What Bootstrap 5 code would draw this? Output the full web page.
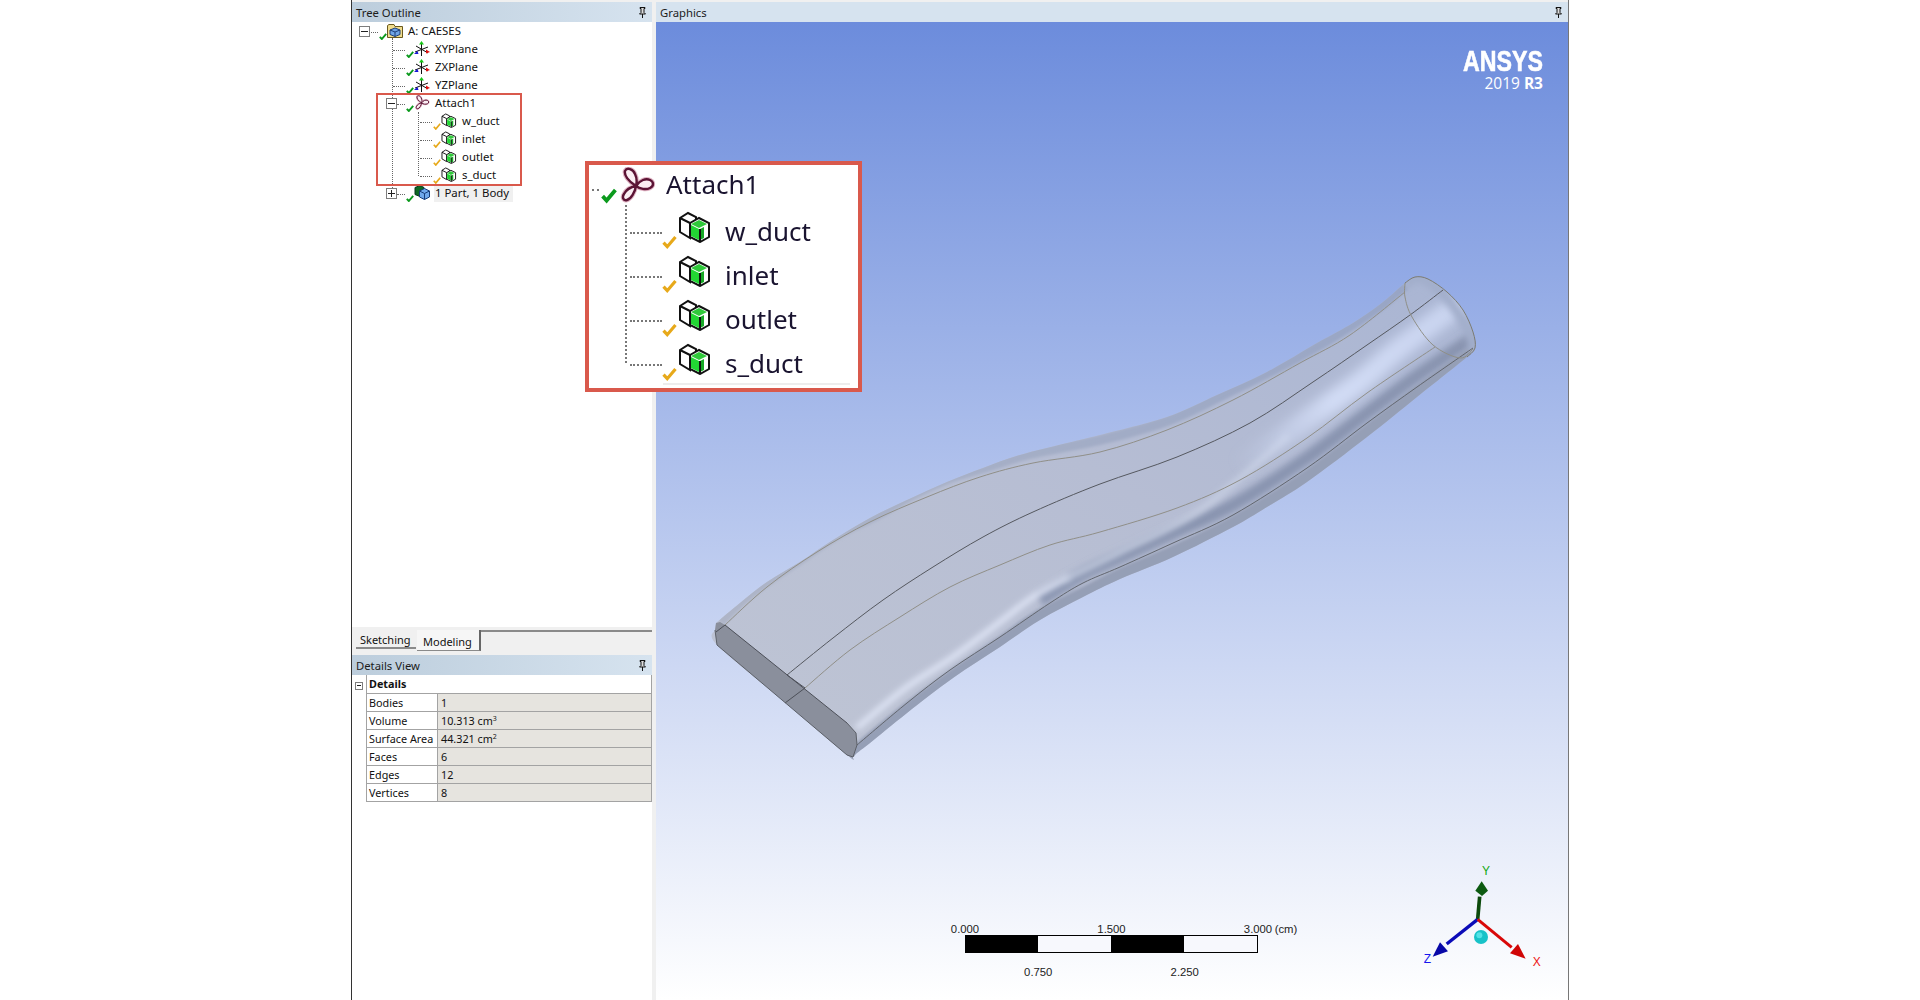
<!DOCTYPE html>
<html lang="en">
<head>
    <meta charset="UTF-8">
    <title>Tree Outline - Graphics</title>
    <link href="https://cdn.jsdelivr.net/npm/bootstrap@5.3.0/dist/css/bootstrap.min.css" rel="stylesheet">
    <style>
        html, body { height: 1000px; overflow: hidden; background: #fff; }
        body { font-family: "Noto Sans", sans-serif; font-size: 11px; color: #111; }

        .app-frame { position: relative; width: 1218px; height: 1000px; margin-left: 351px; padding-top: 2px; border-left: 1px solid #333; border-right: 1px solid #777; background: #f0f0f0; }
        .left-pane { width: 300px; height: 998px; background: #fff; }
        .pane-gutter { width: 4px; background: #f0f0f0; }
        .right-pane { width: 912px; height: 998px; }
        .pane-head { height: 20px; padding: 1px 4px 0; line-height: 19px; font-size: 11.3px; color: #1c1c1c; background: linear-gradient(to right, #bccddc, #d6e3ef); }
        .right-pane .pane-head { background: #d6e3ef; }
        .pin-icon { width: 9px; height: 11px; margin-right: 1px; }

        /* tree */
        .tree-box { position: relative; height: 605px; }
        .tree-row { display: flex; align-items: center; height: 18px; font-size: 11.4px; white-space: nowrap; }
        .d0 { padding-left: 7px; }
        .d1 { padding-left: 34px; }
        .d2 { padding-left: 61px; }
        .slot { position: relative; flex: 0 0 20px; height: 18px; }
        .slot::after { content: ""; position: absolute; top: 10px; right: 1px; width: 12px; border-top: 1px dotted #666; }
        .slot.no-dots::after { width: 8px; }
        .xbox { position: absolute; top: 4px; left: 0; z-index: 1; width: 11px; height: 11px; border: 1px solid #7d7d7d; background: #fff; }
        .xbox::before { content: ""; position: absolute; top: 4px; left: 1px; width: 7px; height: 1px; background: #222; }
        .xbox.closed::after { content: ""; position: absolute; top: 1px; left: 4px; width: 1px; height: 7px; background: #222; }
        .ck { flex: 0 0 8px; width: 8px; height: 7px; margin-top: 11px; }
        .ico { flex: 0 0 16px; width: 16px; height: 15px; margin-left: 0; margin-top: -2px; }
        .lbl { margin-left: 5px; }
        .lbl-on { margin-left: 4px; padding: 0 4px 0 1px; background: #f0f0f0; }
        .vguide { position: absolute; width: 0; border-left: 1px dotted #666; }
        .hl-box { position: absolute; left: 24px; top: 93px; width: 146px; height: 93px; border: 2px solid #d9594c; }

        /* tabs and details */
        .tab-strip { height: 28px; padding: 3px 0 0 4px; background: #f0f0f0; }
        .tab-a { width: 60px; height: 18px; margin-top: 1px; padding: 1px 0 0 4px; line-height: 16px; background: #f0f0f0; border-bottom: 2px solid #8a8a8a; }
        .tab-b { width: 64px; height: 21px; margin-left: 1px; padding: 4px 0 0 6px; line-height: 16px; background: #f6f6f6; border-right: 2px solid #666; border-bottom: 1px solid #8a8a8a; }
        .tab-rest { height: 2px; background: #8a8a8a; }
        .details-box { height: 325px; background: #fff; }
        .tbl-gutter { position: relative; flex: 0 0 14px; }
        .xmini { position: absolute; left: 3px; top: 7px; width: 8px; height: 8px; border: 1px solid #7d7d7d; }
        .xmini::before { content: ""; position: absolute; left: 1px; top: 2px; width: 4px; height: 1px; background: #222; }
        .det-table { width: 286px; border-collapse: collapse; table-layout: fixed; font-size: 10.8px; }
        .det-table td { height: 18px; padding: 0 3px; line-height: 15px; border: 1px solid #a3a3a3; white-space: nowrap; }
        .det-table td:first-child { padding-left: 2px; }
        .det-table .val { background: #e6e4df; }
        .det-table th { height: 18px; padding: 0 2px; font-weight: 700; border: 1px solid #a3a3a3; border-top: 0; }
        .det-table sup { top: -.45em; font-size: 7px; }

        /* graphics */
        .view-port { position: relative; height: 978px; overflow: hidden; background: linear-gradient(to bottom, #6c8cdc, #fff); }
        .duct-svg { position: absolute; left: 44px; top: 238px; width: 800px; height: 520px; }
        .triad-svg { position: absolute; left: 724px; top: 828px; width: 188px; height: 150px; }
        .brand-box { position: absolute; top: 27px; right: 25px; color: #fff; text-align: right; }
        .brand-name { font-family: "Liberation Sans", sans-serif; font-size: 29px; font-weight: 700; line-height: 25px; -webkit-text-stroke: .6px #fff; transform: scaleX(.8); transform-origin: right center; }
        .brand-ver { font-family: "Open Sans", sans-serif; font-size: 15.5px; line-height: 19px; font-weight: 400; }
        .brand-ver b { font-weight: 700; }
        .scale-box { position: absolute; left: 309px; top: 900px; width: 293px; font-family: "Liberation Sans", sans-serif; font-size: 11.3px; color: #222; }
        .scale-labels { position: relative; height: 13px; }
        .scale-labels.low { height: 22px; }
        .scale-labels span { position: absolute; top: 0; transform: translateX(-50%); line-height: 14px; white-space: nowrap; }
        .scale-labels.low span { top: 12px; }
        .scale-bar { height: 18px; border: 1px solid #000; border-left: 0; }
        .seg-dark { flex: 1 1 0; background: #000; }
        .seg-lite { flex: 1 1 0; background: #f7f8fd; }

        /* enlarged callout */
        .zoom-card { position: absolute; left: 233px; top: 161px; width: 277px; height: 231px; padding: 6px 0 0 7px; background: #fff; border: 4.5px solid #d9594c; }
        .zoom-inner { position: relative; height: 210px; filter: blur(.55px); }
        .zoom-row { display: flex; align-items: center; height: 44px; font-size: 26px; white-space: nowrap; color: #1a1430; }
        .zoom-row.top { height: 42px; margin: -7px 0 7px -4px; }
        .zoom-row.sub { padding-left: 34px; }
        .zdots { flex: 0 0 7px; margin-top: 10px; border-top: 2px dotted #777; }
        .zdots.long { flex: 0 0 32px; margin-top: -4px; }
        .zck-g { flex: 0 0 16px; width: 16px; height: 17px; margin: 20px 0 0 2px; }
        .zck-o { flex: 0 0 15px; width: 15px; height: 16px; margin: 14px 0 0 0; }
        .zblade { flex: 0 0 36px; width: 36px; height: 36px; margin: 0 0 0 2px; }
        .zcube { flex: 0 0 34px; width: 34px; height: 32px; margin: -16px 0 0 1px; }
        .zlbl-a { margin-left: 11px; margin-top: -1px; }
        .zlbl-b { margin-left: 13px; margin-top: -8px; }
        .zguide { position: absolute; left: 29px; top: 41px; height: 158px; width: 0; border-left: 2px dotted #777; }
        .zstrip { position: absolute; left: 67px; right: 8px; top: 219px; height: 2px; background: #ededed; }
    </style>
</head>
<body>
    <svg width="0" height="0" class="position-absolute">
        <symbol id="s-pin" viewBox="0 0 9 11">
            <path d="M2 .5h5v1H6v4l1.5 1.5h-6L3 5.500v-4H2zM4.500 7v4" fill="#ddd" stroke="#111" stroke-width="1"/>
        </symbol>
        <symbol id="s-check-g" viewBox="0 0 8 7">
            <path d="M.8 3.800l2 2.200L7.200.8" fill="none" stroke="#0b9a1d" stroke-width="1.900"/>
        </symbol>
        <symbol id="s-check-o" viewBox="0 0 8 7">
            <path d="M.8 3.800l2 2.200L7.200.8" fill="none" stroke="#e7a91a" stroke-width="1.700"/>
        </symbol>
        <symbol id="s-cube" viewBox="0 0 34 32">
            <path d="M2 7l8-5 8 4v3l-6 4v14L2 21z" fill="#fff" stroke="#111" stroke-width="2"/>
            <path d="M12 12l9-5 10 5v14l-9 5-10-5z" fill="#fff" stroke="#111" stroke-width="2"/>
            <path d="M13 13l8-4 8 4-8 4z" fill="#2fc93a"/>
            <path d="M13 14l8 4v11l-8-4z" fill="#22d633"/>
            <path d="M22 18l4-2v11l-4 2z" fill="#16a925"/>
            <path d="M22 18v12M2 7l10 5" fill="none" stroke="#111" stroke-width="2"/>
        </symbol>
        <symbol id="s-plane" viewBox="0 0 16 15">
            <path d="M7.500 2v13M2 5l12 7M1 11l13-5" fill="none" stroke="#111" stroke-width="1"/>
            <path d="M7.500 0l2.500 3.500H5z" fill="#14c814"/>
            <path d="M16 11l-4 1.500V8.500z" fill="#e01010"/>
            <path d="M0 13l3.500-3 1 3z" fill="#1515d8"/>
        </symbol>
        <symbol id="s-folder" viewBox="0 0 16 15">
            <path d="M.5 2.500V14.500h15V3.500H8l-1-2H2z" fill="#f0dc8c" stroke="#6b5a1e" stroke-width="1"/>
            <path d="M8 5l5 2v4.500l-5 2-5-2V7z" fill="#6fa4e6" stroke="#1c3e78" stroke-width="1"/>
            <path d="M3 7l5 2 5-2M8 9v4.500" fill="none" stroke="#1c3e78" stroke-width="1"/>
        </symbol>
        <symbol id="s-part" viewBox="0 0 16 15">
            <path d="M1 2.500L6 .5l4 2v7l-4 2-5-2z" fill="#0d6a24" stroke="#06361a" stroke-width="1"/>
            <path d="M5.500 6l5-2.500L15.500 6v6l-5 2.500-5-2.500z" fill="#6fa8ec" stroke="#173d7a" stroke-width="1"/>
            <path d="M5.500 6l5 2.500L15.500 6M10.500 8.500v6" fill="none" stroke="#173d7a" stroke-width="1"/>
        </symbol>
        <symbol id="s-blade" viewBox="0 0 36 36">
            <path d="M17 19C9 14 5 8 6 4 8 0 14 2 16 7 18 11 18 15 17 19zM17 19C21 13 27 11 31 13 35 15 35 19 31 21 27 23 21 22 17 19zM17 19C16 25 12 32 8 33 4 34 3 30 5 27 7 23 12 20 17 19z" fill="#fff" stroke="#e0b4c4" stroke-width="4.500"/>
            <path d="M17 19C9 14 5 8 6 4 8 0 14 2 16 7 18 11 18 15 17 19zM17 19C21 13 27 11 31 13 35 15 35 19 31 21 27 23 21 22 17 19zM17 19C16 25 12 32 8 33 4 34 3 30 5 27 7 23 12 20 17 19z" fill="#fbeef3" stroke="#5c1435" stroke-width="2.400"/>
        </symbol>
    </svg>

    <div class="app-frame d-flex">
        <div class="left-pane d-flex flex-column flex-shrink-0">
            <div class="pane-head d-flex justify-content-between align-items-center">
                <span>Tree Outline</span>
                <svg class="pin-icon"><use href="#s-pin"/></svg>
            </div>
            <div class="tree-box">
                <div class="vguide" style="left:40px;top:16px;height:154px"></div>
                <div class="vguide" style="left:66px;top:90px;height:64px"></div>

                <div class="tree-row d0">
                    <div class="slot"><i class="xbox"></i></div>
                    <svg class="ck"><use href="#s-check-g"/></svg>
                    <svg class="ico"><use href="#s-folder"/></svg>
                    <span class="lbl">A: CAESES</span>
                </div>
                <div class="tree-row d1">
                    <div class="slot"></div>
                    <svg class="ck"><use href="#s-check-g"/></svg>
                    <svg class="ico"><use href="#s-plane"/></svg>
                    <span class="lbl">XYPlane</span>
                </div>
                <div class="tree-row d1">
                    <div class="slot"></div>
                    <svg class="ck"><use href="#s-check-g"/></svg>
                    <svg class="ico"><use href="#s-plane"/></svg>
                    <span class="lbl">ZXPlane</span>
                </div>
                <div class="tree-row d1">
                    <div class="slot"></div>
                    <svg class="ck"><use href="#s-check-g"/></svg>
                    <svg class="ico"><use href="#s-plane"/></svg>
                    <span class="lbl">YZPlane</span>
                </div>
                <div class="tree-row d1">
                    <div class="slot no-dots"><i class="xbox"></i></div>
                    <svg class="ck"><use href="#s-check-g"/></svg>
                    <svg class="ico"><use href="#s-blade"/></svg>
                    <span class="lbl">Attach1</span>
                </div>
                <div class="tree-row d2">
                    <div class="slot"></div>
                    <svg class="ck"><use href="#s-check-o"/></svg>
                    <svg class="ico"><use href="#s-cube"/></svg>
                    <span class="lbl">w_duct</span>
                </div>
                <div class="tree-row d2">
                    <div class="slot"></div>
                    <svg class="ck"><use href="#s-check-o"/></svg>
                    <svg class="ico"><use href="#s-cube"/></svg>
                    <span class="lbl">inlet</span>
                </div>
                <div class="tree-row d2">
                    <div class="slot"></div>
                    <svg class="ck"><use href="#s-check-o"/></svg>
                    <svg class="ico"><use href="#s-cube"/></svg>
                    <span class="lbl">outlet</span>
                </div>
                <div class="tree-row d2">
                    <div class="slot"></div>
                    <svg class="ck"><use href="#s-check-o"/></svg>
                    <svg class="ico"><use href="#s-cube"/></svg>
                    <span class="lbl">s_duct</span>
                </div>
                <div class="tree-row d1">
                    <div class="slot no-dots"><i class="xbox closed"></i></div>
                    <svg class="ck"><use href="#s-check-g"/></svg>
                    <svg class="ico"><use href="#s-part"/></svg>
                    <span class="lbl-on">1 Part, 1 Body</span>
                </div>
            </div>

            <div class="tab-strip d-flex">
                <div class="tab-a">Sketching</div>
                <div class="tab-b">Modeling</div>
                <div class="flex-grow-1"><div class="tab-rest"></div></div>
            </div>

            <div class="pane-head d-flex justify-content-between align-items-center">
                <span>Details View</span>
                <svg class="pin-icon"><use href="#s-pin"/></svg>
            </div>
            <div class="details-box d-flex align-items-start">
                <div class="tbl-gutter"><i class="xmini"></i></div>
                <table class="det-table">
                    <colgroup><col style="width:71px"><col></colgroup>
                    <tr><th colspan="2">Details</th></tr>
                    <tr><td>Bodies</td><td class="val">1</td></tr>
                    <tr><td>Volume</td><td class="val">10.313 cm<sup>3</sup></td></tr>
                    <tr><td>Surface Area</td><td class="val">44.321 cm<sup>2</sup></td></tr>
                    <tr><td>Faces</td><td class="val">6</td></tr>
                    <tr><td>Edges</td><td class="val">12</td></tr>
                    <tr><td>Vertices</td><td class="val">8</td></tr>
                </table>
            </div>
        </div>

        <div class="pane-gutter"></div>

        <div class="right-pane d-flex flex-column">
            <div class="pane-head d-flex justify-content-between align-items-center">
                <span>Graphics</span>
                <svg class="pin-icon"><use href="#s-pin"/></svg>
            </div>
            <div class="view-port">
                <svg class="duct-svg" viewBox="700 260 800 520">
                    <defs>
                        <linearGradient id="body-fill" x1="0" y1="1" x2="1" y2="0">
                            <stop offset="0" stop-color="#bfc5d4"/>
                            <stop offset=".55" stop-color="#b6bdd3"/>
                            <stop offset="1" stop-color="#a9b5d3"/>
                        </linearGradient>
                        <linearGradient id="top-band" gradientUnits="userSpaceOnUse" x1="716" y1="0" x2="1405" y2="0">
                            <stop offset="0" stop-color="#aeb5c7"/>
                            <stop offset="1" stop-color="#98a5c5"/>
                        </linearGradient>
                        <linearGradient id="end-glow" gradientUnits="userSpaceOnUse" x1="1240" y1="470" x2="1470" y2="300">
                            <stop offset="0" stop-color="#cfdaf4" stop-opacity="0"/>
                            <stop offset=".4" stop-color="#d2dcf5"/>
                            <stop offset="1" stop-color="#c8d3ef"/>
                        </linearGradient>
                        <filter id="tiny" filterUnits="userSpaceOnUse" x="700" y="260" width="800" height="520"><feGaussianBlur stdDeviation="1.500"/></filter>
                        <filter id="soft" filterUnits="userSpaceOnUse" x="700" y="260" width="800" height="520"><feGaussianBlur stdDeviation="3"/></filter>
                        <filter id="softer" filterUnits="userSpaceOnUse" x="700" y="260" width="800" height="520"><feGaussianBlur stdDeviation="6"/></filter>
                        <clipPath id="body-clip"><path class="spline body-outline" data-close="1"/></clipPath>
                    </defs>
                    <path class="spline body-outline" data-close="1" fill="url(#body-fill)"/>
                    <g clip-path="url(#body-clip)">
                        <!-- top edge falloff -->
                        <path class="spline" fill="none" stroke="url(#top-band)" stroke-width="10" filter="url(#tiny)" data-pts="720,622 745,598 772,578 805,556 840,533 875,516 912,495 950,478 990,466 1030,454 1100,440 1167,421 1225,394 1285,364 1335,336 1380,306 1405,285"/>
                        <!-- shadow above the lower seam -->
                        <path class="spline" fill="none" stroke="#8994b0" stroke-width="13" filter="url(#soft)" data-pts="1040,600 1083,574 1120,557 1173,533 1233,505 1307,458 1367,413 1417,376 1473,338"/>
                        <!-- highlights -->
                        <path class="spline" fill="none" stroke="#e4eafa" stroke-width="5" stroke-linecap="round" filter="url(#soft)" data-pts="858,727 907,687 953,657 1000,622 1033,597 1067,578"/>
                        <path class="spline" fill="none" stroke="#c9d1e4" stroke-width="5" stroke-linecap="round" filter="url(#soft)" data-pts="1067,578 1120,552 1200,510 1287,437"/>
                        <path class="spline" fill="none" stroke="url(#end-glow)" stroke-width="22" stroke-linecap="round" filter="url(#softer)" data-pts="1240,468 1307,420 1360,382 1400,348 1465,300"/>
                        <!-- band under the lower seam -->
                        <path class="spline" fill="none" stroke="#959fb6" stroke-width="15" filter="url(#tiny)" data-pts="850,758 907,711 953,677 1000,645 1040,617 1083,595 1120,576 1173,553 1233,524 1307,478 1367,433 1417,394 1472,354"/>
                        <!-- far end of the duct -->
                        <path class="spline" fill="none" stroke="#a2aecb" stroke-width="10" filter="url(#soft)" data-pts="1405,285 1420,278 1445,296 1468,330 1474,350"/>
                    </g>
                    <path fill="#8a8f9c" d="M716 623L720 622 725 625 847 723 856 733 857 745 853 757 847 755 717 645 715 630z"/>
                    <g fill="none" stroke-width="1">
                        <path class="spline" stroke="#908f88" data-pts="725,625 767,587 817,552 870,522 927,497 980,477 1033,463 1100,452 1167,430 1233,400 1300,363 1350,335 1405,292"/>
                        <path class="spline" stroke="#55585f" data-pts="787,675 833,638 883,600 933,567 983,537 1033,512 1100,484 1177,457 1250,423 1313,382 1367,345 1410,315 1443,290"/>
                        <path class="spline" stroke="#908f88" data-pts="805,688 850,650 900,617 950,587 1000,565 1050,545 1100,532 1177,508 1240,480 1307,438 1367,393 1435,347"/>
                        <path class="spline" stroke="#62666e" data-pts="857,745 907,703 950,670 1000,637 1050,603 1083,583 1120,567 1173,543 1233,515 1307,468 1367,423 1417,387 1473,348"/>
                        <path class="spline" stroke="#8f8f86" data-pts="1405,283 1405,297 1412,317 1433,345 1460,358 1473,349"/>
                        <path class="spline" stroke="#7b7b72" data-pts="1405,283 1415,277 1428,279 1447,292 1463,310 1473,332 1475,348 1467,357"/>
                        <path stroke="#4c4f58" d="M725 625L847 723M785 703L805 688M716 632L725 625M787 675L805 688"/>
                        <path stroke="#5c6068" d="M715 630L717 645 847 755 853 757 857 745 856 733 847 723"/>
                    </g>
                </svg>

                <div class="brand-box">
                    <div class="brand-name">ANSYS</div>
                    <div class="brand-ver">2019 <b>R3</b></div>
                </div>

                <div class="scale-box">
                    <div class="scale-labels">
                        <span style="left:0">0.000</span>
                        <span style="left:50%">1.500</span>
                        <span style="left:100%">3.000</span>
                        <span style="left:100%;margin-left:28px">(cm)</span>
                    </div>
                    <div class="scale-bar d-flex">
                        <div class="seg-dark"></div><div class="seg-lite"></div>
                        <div class="seg-dark"></div><div class="seg-lite"></div>
                    </div>
                    <div class="scale-labels low">
                        <span style="left:25%">0.750</span>
                        <span style="left:75%">2.250</span>
                    </div>
                </div>

                <svg class="triad-svg" viewBox="0 0 564 450">
                    <path d="M293 208L299 140" stroke="#0c4a0c" stroke-width="11" fill="none"/>
                    <path d="M305 94L324 122 306 138 286 122z" fill="#0c5a10"/>
                    <path d="M293 208L200 282" stroke="#0b0bb8" stroke-width="10" fill="none"/>
                    <path d="M158 320L180 277 204 304z" fill="#0808a8"/>
                    <path d="M293 208L395 292" stroke="#d90808" stroke-width="9" fill="none"/>
                    <path d="M437 326L414 282 390 310z" fill="#d00606"/>
                    <circle cx="303" cy="261" r="21" fill="#17c2c8"/>
                    <circle cx="298" cy="256" r="9" fill="#52e2e6"/>
                    <text x="306" y="76" font-family="Liberation Sans, sans-serif" font-size="36" fill="#12a812">Y</text>
                    <text x="131" y="339" font-family="Liberation Sans, sans-serif" font-size="36" fill="#1616ee">Z</text>
                    <text x="458" y="349" font-family="Liberation Sans, sans-serif" font-size="36" fill="#ee1616">X</text>
                </svg>
            </div>
        </div>

        <div class="hl-box"></div>

        <div class="zoom-card">
            <div class="zoom-inner">
                <div class="zguide"></div>
                <div class="zoom-row top">
                    <div class="zdots"></div>
                    <svg class="zck-g"><use href="#s-check-g"/></svg>
                    <svg class="zblade"><use href="#s-blade"/></svg>
                    <span class="zlbl-a">Attach1</span>
                </div>
                <div class="zoom-row sub">
                    <div class="zdots long"></div>
                    <svg class="zck-o"><use href="#s-check-o"/></svg>
                    <svg class="zcube"><use href="#s-cube"/></svg>
                    <span class="zlbl-b">w_duct</span>
                </div>
                <div class="zoom-row sub">
                    <div class="zdots long"></div>
                    <svg class="zck-o"><use href="#s-check-o"/></svg>
                    <svg class="zcube"><use href="#s-cube"/></svg>
                    <span class="zlbl-b">inlet</span>
                </div>
                <div class="zoom-row sub">
                    <div class="zdots long"></div>
                    <svg class="zck-o"><use href="#s-check-o"/></svg>
                    <svg class="zcube"><use href="#s-cube"/></svg>
                    <span class="zlbl-b">outlet</span>
                </div>
                <div class="zoom-row sub">
                    <div class="zdots long"></div>
                    <svg class="zck-o"><use href="#s-check-o"/></svg>
                    <svg class="zcube"><use href="#s-cube"/></svg>
                    <span class="zlbl-b">s_duct</span>
                </div>
                <div class="zstrip"></div>
            </div>
        </div>
    </div>

    <script src="https://cdn.jsdelivr.net/npm/bootstrap@5.3.0/dist/js/bootstrap.bundle.min.js"></script>
    <script>
        // outline of the duct body, corners get close point pairs so they stay sharp
        const bodyPts = '716,623 740,603 767,582 800,562 833,540 870,518 907,500 947,482 983,468 1020,455 1067,443 1100,435 1167,417 1217,395 1267,372 1317,343 1353,323 1383,302 1405,283 1415,277 1428,279 1447,292 1463,310 1473,332 1475,348 1467,357 1417,397 1367,437 1307,482 1267,507 1233,527 1173,557 1120,579 1083,597 1040,620 1000,647 953,678 907,713 870,743 857,753 853,757 847,755 782,700 717,645 715,630'

        // smooth the duct outlines through their points
        document.querySelectorAll('.spline').forEach(el => {
            const src = el.classList.contains('body-outline') ? bodyPts : el.dataset.pts
            const p = src.split(' ').map(s => s.split(',').map(Number))
            let d = `M${p[0][0]} ${p[0][1]}`
            for (let i = 0; i < p.length - 1; i++) {
                const a = p[Math.max(i - 1, 0)], b = p[i], c = p[i + 1], e = p[Math.min(i + 2, p.length - 1)]
                d += `C${b[0] + (c[0] - a[0]) / 6} ${b[1] + (c[1] - a[1]) / 6} ${c[0] - (e[0] - b[0]) / 6} ${c[1] - (e[1] - b[1]) / 6} ${c[0]} ${c[1]}`
            }
            if (el.dataset.close) d += 'Z'
            el.setAttribute('d', d)
        })
    </script>
</body>
</html>
